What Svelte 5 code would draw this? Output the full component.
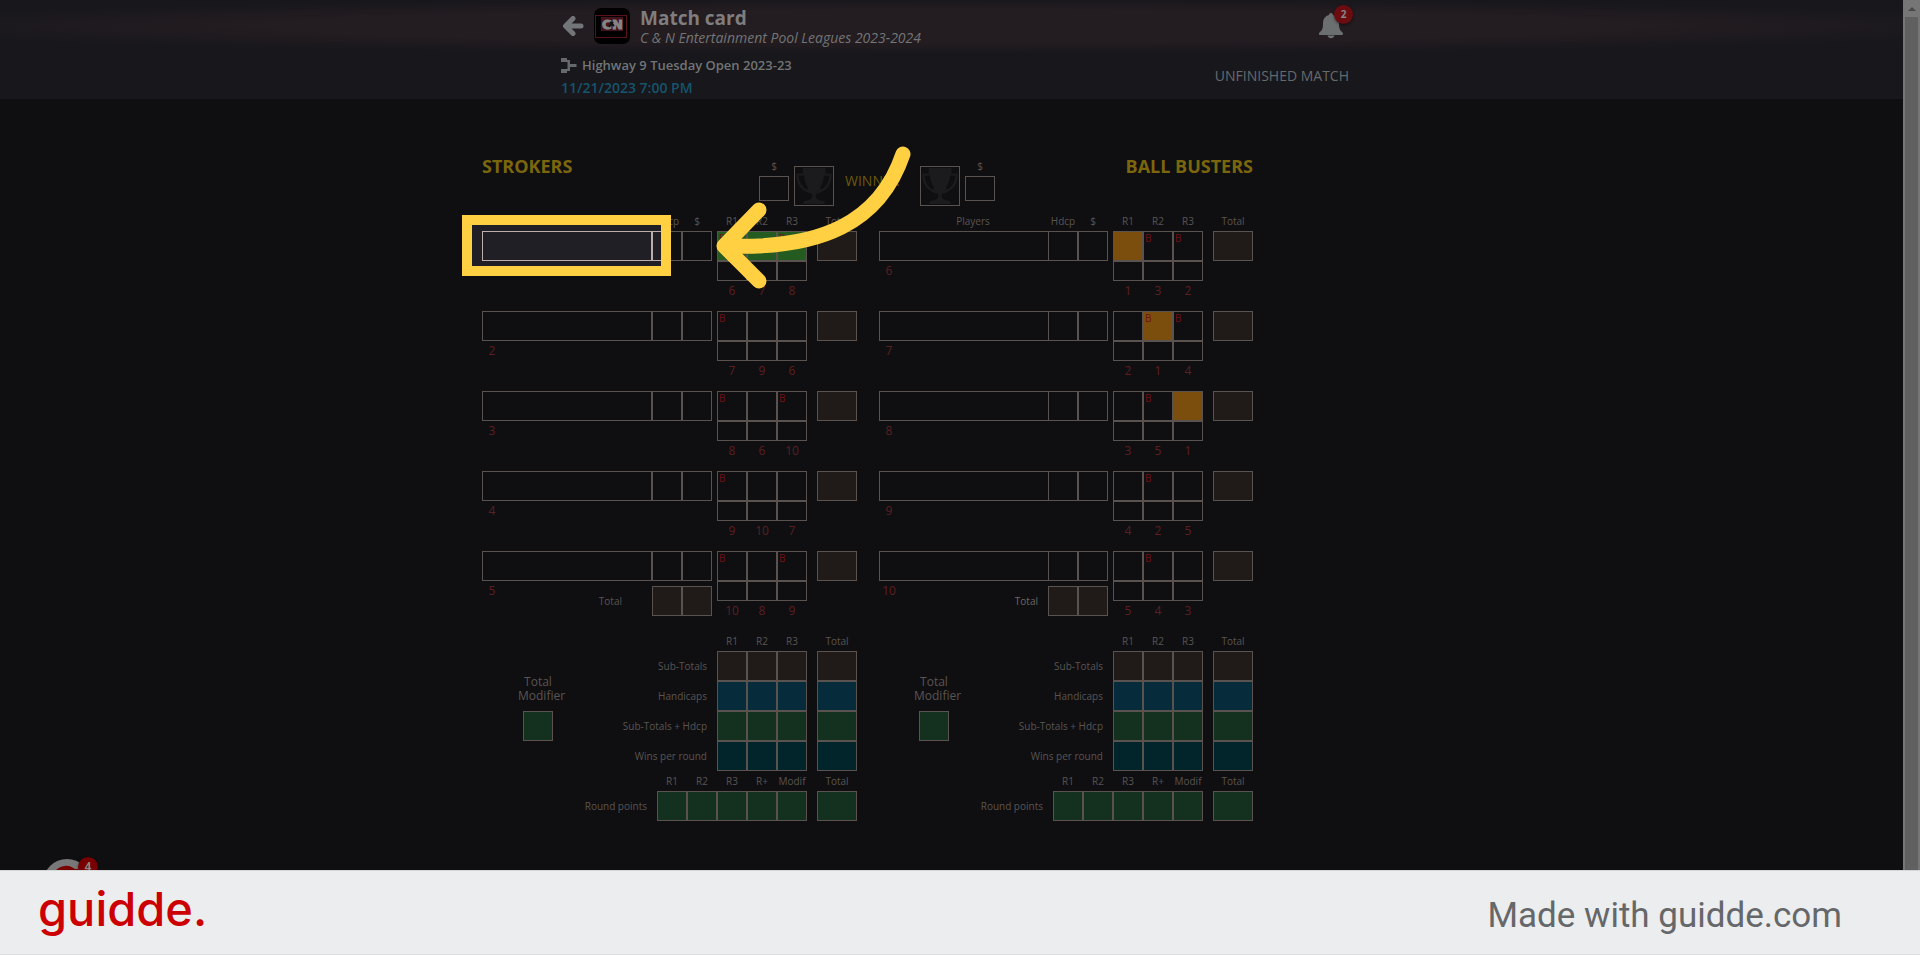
<script>
    const ROUNDS = ['R1', 'R2', 'R3'];
    const POINTS = ['R1', 'R2', 'R3', 'R+', 'Modif'];

    const SUMMARY = [
        { label: 'Sub-Totals', tone: 'tan' },
        { label: 'Handicaps', tone: 'blue' },
        { label: 'Sub-Totals + Hdcp', tone: 'green' },
        { label: 'Wins per round', tone: 'teal' },
    ];

    // breaks: rounds where the player breaks, current: rounds marked as active
    const TEAMS = [
        {
            id: 'home',
            name: 'Strokers',
            players: [
                { seat: 1, opponents: [6, 7, 8], breaks: [0, 2], current: [0, 1, 2] },
                { seat: 2, opponents: [7, 9, 6], breaks: [0], current: [] },
                { seat: 3, opponents: [8, 6, 10], breaks: [0, 2], current: [] },
                { seat: 4, opponents: [9, 10, 7], breaks: [0], current: [] },
                { seat: 5, opponents: [10, 8, 9], breaks: [0, 2], current: [] },
            ],
        },
        {
            id: 'away',
            name: 'Ball Busters',
            players: [
                { seat: 6, opponents: [1, 3, 2], breaks: [1, 2], current: [0] },
                { seat: 7, opponents: [2, 1, 4], breaks: [1, 2], current: [1] },
                { seat: 8, opponents: [3, 5, 1], breaks: [1], current: [2] },
                { seat: 9, opponents: [4, 2, 5], breaks: [1], current: [] },
                { seat: 10, opponents: [5, 4, 3], breaks: [1], current: [] },
            ],
        },
    ];
</script>

{#snippet trophy(label)}
    <button class="cell trophy" aria-label={label}>
        <svg viewBox="0 0 40 40">
            <path d="M8 1H32V6C32 16 28 25 23 27C21.5 28 21.5 32 23 33.5C25 35 28 35.5 31 36V39H9V36C12 35.5 15 35 17 33.5C18.5 32 18.5 28 17 27C12 25 8 16 8 6Z" />
            <path class="handle" d="M9 8H2.500C2.500 17 7 24 17 27M31 8H37.500C37.500 17 33 24 23 27" />
            <path class="gap" d="M8.500 9C9 15 10.500 19 13 22.500" />
            <path class="gap" d="M31.500 9C31 15 29.500 19 27 22.500" />
        </svg>
    </button>
{/snippet}

{#snippet money(id)}
    <div class="money">
        <label for={id}>$</label>
        <input {id} class="cell" type="text" />
    </div>
{/snippet}

<div class="page">
    <header>
        <div class="bar">
            <div class="brand">
                <button class="icon-btn back" aria-label="Back">
                    <svg viewBox="0 0 22 20"><path d="M11 2.500L3.500 10L11 17.500M4 10H19" /></svg>
                </button>
                <svg class="logo" viewBox="0 0 36 36">
                    <rect width="36" height="36" rx="7" fill="#000" />
                    <rect x="1.500" y="7.500" width="31" height="22" fill="none" stroke="#5a1119" />
                    <rect x="7" y="9" width="22" height="14" fill="#43121a" />
                    <text x="8" y="21">C</text>
                    <text x="18" y="21">N</text>
                    <path d="M15 19L19 14M16 14L20 18" stroke="#111" stroke-width="2" />
                </svg>
                <div>
                    <h1>Match card</h1>
                    <p class="subtitle">C &amp; N Entertainment Pool Leagues 2023-2024</p>
                </div>
            </div>
            <button class="icon-btn bell" aria-label="Notifications">
                <svg viewBox="0 0 24 26">
                    <path d="M12 0C13.200 0 14 .8 14 2C18 3 20 6 20 10C20 15 20.500 17 23.500 19.500C24.500 20.500 24 22 23 22H1C0 22 -.5 20.500 .5 19.500C3.500 17 4 15 4 10C4 6 6 3 10 2C10 .8 10.800 0 12 0ZM8.500 22.500H15.500C15 26 9 26 8.500 22.500Z" />
                </svg>
                <span class="badge">2</span>
            </button>
        </div>
        <div class="bar">
            <div class="match">
                <div class="league">
                    <svg viewBox="0 0 16 15"><path d="M0 0H6V2H9V6H15.500V9H9V13H6V15H0V11H6.500V4H0Z" /></svg>
                    Highway 9 Tuesday Open 2023-23
                </div>
                <time>11/21/2023 7:00 PM</time>
            </div>
            <span class="status">UNFINISHED MATCH</span>
        </div>
    </header>

    <main>
        <div class="card">
            <section class="winner">
                <h2>{TEAMS[0].name}</h2>
                <div class="picker">
                    {@render money('home-money')}
                    {@render trophy('Home team won')}
                    <span class="winner-label">WINNER</span>
                    {@render trophy('Away team won')}
                    {@render money('away-money')}
                </div>
                <h2 class="right">{TEAMS[1].name}</h2>
            </section>

            <div class="teams">
                {#each TEAMS as team}
                    <section class="team {team.id}">
                        <div class="line heads">
                            <div class="who boxes">
                                <span class="name">Players</span>
                                <span>Hdcp</span>
                                <span>$</span>
                            </div>
                            <div class="rounds">
                                {#each ROUNDS as r}<span>{r}</span>{/each}
                            </div>
                            <span class="total">Total</span>
                        </div>

                        {#each team.players as p, i}
                            <div class="line player">
                                <div class="who">
                                    <div class="boxes">
                                        <button class="cell name" aria-label="Player {p.seat}"></button>
                                        <input class="cell" type="text" aria-label="Handicap {p.seat}" />
                                        <input class="cell" type="text" aria-label="Money {p.seat}" />
                                    </div>
                                    <div class="below">
                                        <span class="seat">{#if p.seat > 1}{p.seat}{/if}</span>
                                        {#if i === team.players.length - 1}
                                            <div class="who-total">
                                                <span>Total</span>
                                                <output class="cell tan"></output>
                                                <output class="cell tan"></output>
                                            </div>
                                        {/if}
                                    </div>
                                </div>
                                <div class="rounds">
                                    {#each ROUNDS as r, n}
                                        <div class="round">
                                            <button
                                                class="cell"
                                                class:current={p.current.includes(n)}
                                                aria-label="{r} score, player {p.seat}"
                                            >{#if p.breaks.includes(n)}B{/if}</button>
                                            <input class="cell short" type="text" aria-label="{r} extra, player {p.seat}" />
                                            <span class="opponent">{p.opponents[n]}</span>
                                        </div>
                                    {/each}
                                </div>
                                <output class="cell total tan"></output>
                            </div>
                        {/each}

                        <div class="summary">
                            <div class="modifier">
                                <label for="{team.id}-modifier">Total Modifier</label>
                                <input id="{team.id}-modifier" class="cell green" type="text" />
                            </div>
                            <div class="line heads">
                                <div class="rounds">
                                    {#each ROUNDS as r}<span>{r}</span>{/each}
                                </div>
                                <span class="total">Total</span>
                            </div>
                            {#each SUMMARY as row}
                                <div class="line">
                                    <span class="row-label">{row.label}</span>
                                    <div class="rounds">
                                        {#each ROUNDS as _}<output class="cell {row.tone}"></output>{/each}
                                    </div>
                                    <output class="cell total {row.tone}"></output>
                                </div>
                            {/each}
                            <div class="line heads">
                                <div class="rounds">
                                    {#each POINTS as r}<span>{r}</span>{/each}
                                </div>
                                <span class="total">Total</span>
                            </div>
                            <div class="line">
                                <span class="row-label">Round points</span>
                                <div class="rounds">
                                    {#each POINTS as _}<output class="cell green"></output>{/each}
                                </div>
                                <output class="cell total green"></output>
                            </div>
                        </div>
                    </section>
                {/each}
            </div>

            <div class="spotlight">
                <div class="lit name"></div>
                <div class="lit"></div>
            </div>
            <svg class="pointer" viewBox="0 0 196 144">
                <path d="M187 9C164 77 106 105 8 101M43 65L8 101L43 136" />
            </svg>
        </div>
    </main>
</div>

<button class="chat" aria-label="Open chat">
    <svg viewBox="0 0 48 48">
        <circle cx="24" cy="24" r="24" fill="#787878" />
        <path d="M12 19C14 8 26 7 31 13M33 10V16" fill="none" stroke="#780000" stroke-width="5" />
    </svg>
    <span class="badge">4</span>
</button>

<div class="scrollbar"><span class="up"></span><span class="thumb"></span></div>

<footer>
    <span class="wordmark">guidde.</span>
    <span class="made">Made with guidde.com</span>
</footer>

<style>
    :global(body) {
        background: #0f0f11;
        font-family: "Open Sans", "Noto Sans", sans-serif;
        color: #595452;
    }
    h1, h2, p {
        margin: 0;
    }
    button, input {
        font: inherit;
        color: inherit;
        padding: 0;
        margin: 0;
        background: none;
        border: none;
        border-radius: 0;
    }
    .page {
        padding-right: 17px;
    }
    header {
        height: 99px;
        background: radial-gradient(ellipse 60% 28px at 50% 26px, #231c20 60%, #17171c);
        color: #727576;
        font-size: 14px;
    }
    .bar {
        max-width: 795px;
        margin: 0 auto;
        display: flex;
        justify-content: space-between;
    }
    .brand {
        display: flex;
        align-items: flex-start;
        padding: 8px 0 0 8px;
    }
    .icon-btn {
        cursor: pointer;
        position: relative;
    }
    .back {
        width: 22px;
        height: 36px;
        margin-right: 10px;
    }
    .back svg {
        display: block;
        width: 22px;
        height: 20px;
        fill: none;
        stroke: #727678;
        stroke-width: 5;
        stroke-linecap: round;
        stroke-linejoin: round;
    }
    .logo {
        width: 36px;
        height: 36px;
        margin-right: 10px;
    }
    .logo text {
        font: bold 13px "DejaVu Sans", sans-serif;
        fill: #858585;
        stroke: #858585;
    }
    h1 {
        font-size: 19px;
        line-height: 20px;
        font-weight: 700;
        color: #7f7d7e;
    }
    .subtitle {
        font-size: 14px;
        line-height: 20px;
        font-style: italic;
    }
    .bell {
        width: 24px;
        height: 26px;
        margin: 13px 6px 0 0;
    }
    .bell svg {
        display: block;
        width: 24px;
        height: 26px;
        fill: #6c6f70;
    }
    .badge {
        position: absolute;
        top: -8px;
        left: 15px;
        width: 19px;
        height: 19px;
        border-radius: 50%;
        background: #6b0c11;
        font-size: 10px;
        line-height: 19px;
        font-weight: 700;
        text-align: center;
        color: #898485;
        box-shadow: 0 1px 3px #0008;
    }
    .match {
        padding: 7px 0 0 7px;
    }
    .league {
        display: flex;
        align-items: center;
        gap: 5px;
        font-size: 13px;
        line-height: 20px;
        font-weight: 600;
    }
    .league svg {
        width: 16px;
        height: 15px;
        fill: #66696b;
    }
    time {
        display: block;
        line-height: 26px;
        font-weight: 600;
        color: #15546c;
    }
    .status {
        padding-top: 16px;
        line-height: 24px;
        font-weight: 500;
        color: #666a6c;
    }
    main {
        max-width: 961px;
        margin: 0 auto;
        padding-top: 57px;
    }
    .card {
        width: 771px;
        margin-left: 11px;
        position: relative;
    }
    .winner {
        display: grid;
        grid-template-columns: 277px auto 1fr;
        height: 55px;
    }
    h2 {
        font-size: 18px;
        line-height: 20px;
        font-weight: 700;
        text-transform: uppercase;
        color: #7c660d;
    }
    .right {
        text-align: right;
    }
    .picker {
        display: flex;
        gap: 5px;
        align-items: flex-start;
    }
    .money {
        display: flex;
        flex-direction: column;
        font-size: 10px;
        line-height: 20px;
        text-align: center;
    }
    .money .cell {
        height: 25px;
    }
    .trophy.cell {
        width: 40px;
        height: 40px;
        margin-top: 10px;
    }
    .trophy svg {
        display: block;
        width: 100%;
        fill: #1b1b1d;
    }
    .trophy .handle {
        fill: none;
        stroke: #1b1b1d;
        stroke-width: 2.5;
    }
    .trophy .gap {
        fill: none;
        stroke: #0f0f11;
        stroke-width: 2;
    }
    .winner-label {
        width: 70px;
        margin: 15px 0 0 6px;
        font-size: 14px;
        line-height: 20px;
        color: #6b580c;
    }
    .teams {
        display: flex;
        justify-content: space-between;
    }
    .line {
        display: flex;
        justify-content: flex-end;
        align-items: flex-start;
    }
    .boxes, .rounds {
        display: flex;
    }
    .cell {
        box-sizing: border-box;
        display: block;
        width: 30px;
        height: 30px;
        flex: none;
        border: 1px solid #59524f;
    }
    .heads {
        font-size: 10px;
        line-height: 20px;
        text-align: center;
    }
    .heads span {
        width: 30px;
    }
    .boxes .name, .lit.name {
        width: 170px;
    }
    .away .name {
        margin-right: -1px;
    }
    .away .heads .name {
        box-sizing: border-box;
        padding-left: 18px;
    }
    .who {
        margin-right: 5px;
    }
    .line .total {
        width: 40px;
        margin-left: 10px;
    }
    .player {
        height: 80px;
    }
    .below {
        display: flex;
        justify-content: space-between;
    }
    .seat, .opponent {
        font-size: 12px;
        line-height: 20px;
        text-align: center;
        color: #5c1f21;
    }
    .seat {
        width: 20px;
    }
    .who-total {
        display: flex;
        margin-top: 5px;
        font-size: 10px;
        line-height: 30px;
    }
    .who-total span {
        margin-right: 30px;
    }
    .away .who-total span {
        margin-right: 10px;
        color: #6b6663;
    }
    .round {
        display: flex;
        flex-direction: column;
    }
    .round button {
        display: flex;
        padding-left: 1px;
        font-size: 10px;
        line-height: 12px;
        color: #6e1116;
    }
    .round .short {
        height: 20px;
    }
    .home .current {
        background: #235b21;
    }
    .away .current {
        background: #7c4e0e;
    }
    .tan {
        background: #201b19;
    }
    .blue {
        background: #062c3c;
    }
    .green {
        background: #14301f;
    }
    .teal {
        background: #02242b;
    }
    .summary {
        position: relative;
    }
    .row-label {
        margin-right: 10px;
        font-size: 10px;
        line-height: 30px;
    }
    .modifier {
        position: absolute;
        top: 44px;
        left: 36px;
        width: 40px;
        display: flex;
        flex-direction: column;
        align-items: center;
        gap: 8px;
        font-size: 12px;
        line-height: 14px;
        text-align: center;
    }
    .away .modifier {
        left: 35px;
    }
    .modifier label {
        width: 40px;
    }
    .spotlight {
        position: absolute;
        top: 59px;
        left: -20px;
        box-sizing: border-box;
        width: 209px;
        height: 61px;
        padding: 6px 0 0 10px;
        display: flex;
        overflow: hidden;
        background: #201f25;
        border: 10px solid #ffd042;
        pointer-events: none;
    }
    .lit {
        box-sizing: border-box;
        flex: none;
        width: 30px;
        height: 30px;
        border: 1px solid #bdaeaa;
    }
    .pointer {
        position: absolute;
        top: -11px;
        left: 234px;
        width: 196px;
        height: 144px;
        fill: none;
        stroke: #ffd042;
        stroke-width: 15;
        stroke-linecap: round;
        stroke-linejoin: round;
        pointer-events: none;
    }
    .chat {
        position: fixed;
        left: 43px;
        bottom: 48px;
        width: 48px;
        height: 48px;
    }
    .chat .badge {
        top: -2px;
        left: 35px;
        width: 20px;
        height: 20px;
        background: #780000;
        font-size: 12px;
    }
    .scrollbar {
        position: fixed;
        top: 0;
        right: 0;
        bottom: 0;
        width: 17px;
        background: #767676;
    }
    .up {
        position: absolute;
        top: 7px;
        left: 5px;
        border: 4px solid transparent;
        border-top: none;
        border-bottom-color: #484848;
    }
    .thumb {
        position: absolute;
        top: 17px;
        bottom: 0;
        left: 2px;
        width: 13px;
        background: #606060;
    }
    footer {
        position: fixed;
        left: 0;
        right: 0;
        bottom: 0;
        box-sizing: border-box;
        height: 85px;
        padding: 0 78px 0 38px;
        display: flex;
        justify-content: space-between;
        background: #ecedef;
        border-top: 1px solid #d5d6d8;
        border-bottom: 1px solid #dcdddf;
    }
    .wordmark {
        font: 500 47px/76px Inter, sans-serif;
        color: #c00;
    }
    .made {
        font: 35px/90px Roboto, sans-serif;
        color: #656769;
    }
</style>
